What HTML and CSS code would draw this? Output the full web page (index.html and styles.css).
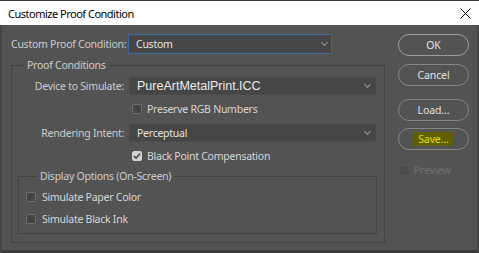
FILE: index.html
```html
<!DOCTYPE html>
<html>
<head>
<meta charset="utf-8">
<link rel="stylesheet" href="styles.css">
</head>
<body>
<div class="window">
  <div class="titlebar">
    <span class="title">Customize Proof Condition</span>
    <svg class="close" width="11" height="11" viewBox="0 0 11 11"><path d="M0.5 0.5 L10.5 10.5 M10.5 0.5 L0.5 10.5" stroke="#000" stroke-width="1" fill="none"/></svg>
  </div>
  <div class="main">
    <div class="left">
      <div class="toprow">
        <span class="label top-label">Custom Proof Condition:</span>
        <div class="select select-main"><span class="val">Custom</span><span class="chev"></span></div>
      </div>
      <fieldset class="group outer">
        <legend>Proof Conditions</legend>
        <div class="frow">
          <span class="label rlabel">Device to Simulate:</span>
          <div class="select select-dev"><span class="val big">PureArtMetalPrint.ICC</span><span class="chev"></span></div>
        </div>
        <div class="crow c1"><span class="box"></span><span class="ctext">Preserve RGB Numbers</span></div>
        <div class="frow r2">
          <span class="label rlabel">Rendering Intent:</span>
          <div class="select select-dev"><span class="val">Perceptual</span><span class="chev"></span></div>
        </div>
        <div class="crow c2"><span class="box checked"><svg width="8" height="8" viewBox="0 0 8 8"><path d="M1 4.2 L3.1 6.2 L7 1.6" stroke="#474747" stroke-width="1.6" fill="none"/></svg></span><span class="ctext">Black Point Compensation</span></div>
        <fieldset class="group inner">
          <legend>Display Options (On-Screen)</legend>
          <div class="crow i1"><span class="box"></span><span class="ctext">Simulate Paper Color</span></div>
          <div class="crow i2"><span class="box"></span><span class="ctext">Simulate Black Ink</span></div>
        </fieldset>
      </fieldset>
    </div>
    <div class="right">
      <div class="btn">OK</div>
      <div class="btn b-cancel">Cancel</div>
      <div class="btn b-load">Load...</div>
      <div class="btn b-save"><span class="hl">Save...</span></div>
      <div class="crow preview"><span class="box dis"></span><span class="ctext dis-text">Preview</span></div>
    </div>
  </div>
</div>
</body>
</html>
```
FILE: styles.css
```css
* { box-sizing: border-box; }
html, body { margin: 0; padding: 0; }
body {
  width: 479px;
  height: 253px;
  overflow: hidden;
  background: #535353;
  font-family: "Noto Sans", "Open Sans", sans-serif;
  font-size: 10.5px;
  letter-spacing: -0.25px;
}
.window {
  width: 479px;
  height: 253px;
  border-top: 1px solid #3a3a3a;
  border-left: 2px solid #454545;
  border-right: 2px solid #454545;
  border-bottom: 3px solid #3c3c3c;
  background: #535353;
}
.titlebar {
  height: 24px;
  background: #ffffff;
  display: flex;
  align-items: center;
  justify-content: space-between;
  margin: 0 -2px;
  padding-left: 8px;
  padding-right: 8px;
}
.title {
  font-size: 11px;
  color: #000;
  letter-spacing: -0.5px;
}
.main {
  display: flex;
  padding-top: 9px;
}
.left {
  margin-left: 9px;
  width: 374px;
}
.label {
  color: #cccccc;
  white-space: nowrap;
}
.toprow {
  display: flex;
  align-items: center;
  height: 20px;
}
.top-label {
  width: 117px;
  flex: none;
}
.select {
  display: flex;
  align-items: center;
  justify-content: space-between;
  background: #464646;
  border: 1px solid #4a4a4a;
  color: #e4e4e4;
  padding: 0 5px 0 7px;
}
.select-main {
  width: 204px;
  height: 20px;
  border: 1px solid #3c6a9e;
  padding-right: 4px;
}
.chev {
  width: 5px;
  height: 5px;
  border-right: 1px solid #9a9a9a;
  border-bottom: 1px solid #9a9a9a;
  transform: rotate(45deg);
  margin-top: -3px;
}
.val { white-space: nowrap; }
.big {
  font-family: "Liberation Sans", Arial, sans-serif;
  font-size: 12.5px;
  letter-spacing: 0;
  color: #ececec;
}
fieldset.group {
  margin: 0;
  border: 1px solid #434343;
  min-width: 0;
}
fieldset.group legend {
  color: #cdcdcd;
  line-height: 14px;
  padding: 0 3px;
}
.outer {
  margin-top: 4px !important;
  width: 374px;
  height: 185px;
  padding: 0 8px 0 0;
}
.outer > legend { margin-left: 12px; }
.frow {
  display: grid;
  grid-template-columns: 112px 247px;
  column-gap: 5px;
  align-items: center;
  margin-top: 5px;
  height: 18px;
}
.frow.r2 { margin-top: 8px; }
.rlabel { text-align: right; }
.select-dev { height: 18px; }
.crow {
  display: flex;
  align-items: center;
  height: 14px;
  gap: 5px;
  color: #d6d6d6;
}
.c1 { margin-top: 7px; margin-left: 120px; }
.c2 { margin-top: 7px; margin-left: 120px; }
.box {
  width: 10px;
  height: 10px;
  border: 1px solid #6e6e6e;
  background: #444444;
  border-radius: 2px;
  display: flex;
  align-items: center;
  justify-content: center;
  flex: none;
}
.box.checked {
  background: #d4d4d4;
  border-color: #d4d4d4;
}
.ctext { white-space: nowrap; }
.inner {
  margin: 6px 7px 0 6px !important;
  width: 359px;
  height: 65px;
  padding: 0 0 0 7px;
}
.inner > legend { margin-left: 11px; }
.inner .crow { gap: 6px; }
.i1 { margin-top: 7px; }
.i2 { margin-top: 8px; }
.right {
  margin-left: 13px;
  width: 71px;
}
.btn {
  width: 71px;
  height: 22px;
  border: 1.5px solid #9d9d9d;
  border-radius: 11px;
  color: #e2e2e2;
  display: flex;
  align-items: center;
  justify-content: center;
  font-size: 10.5px;
  letter-spacing: -0.1px;
}
.b-cancel { margin-top: 8px; border-color: #858585; }
.b-load { margin-top: 13px; border-color: #858585; }
.b-save { margin-top: 7px; border-color: #858585; }
.hl {
  background: #5f5f00;
  color: #e0e000;
  padding: 0 4px;
  line-height: 14px;
}
.preview {
  margin-top: 13px;
  padding-left: 2px;
  gap: 5px;
}
.box.dis {
  width: 9px;
  height: 9px;
  border-color: #4e4e4e;
  background: #4b4b4b;
}
.dis-text { color: #6f6f6f; }
```
